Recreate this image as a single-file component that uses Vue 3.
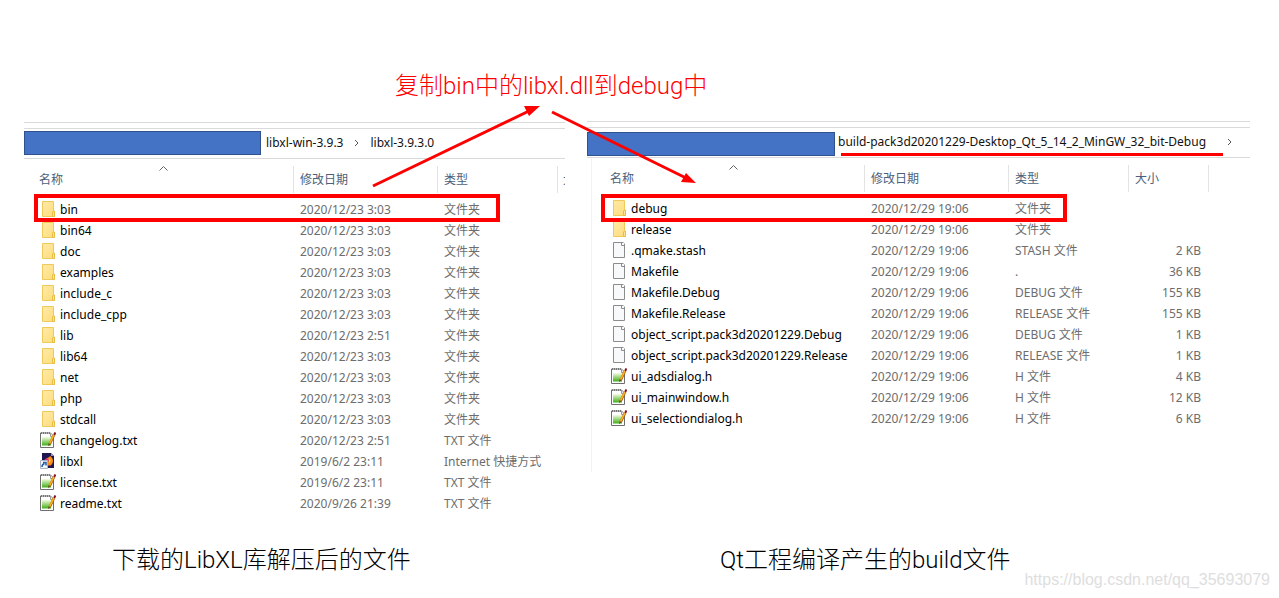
<script setup>
const folder = (name, date = '2020/12/23 3:03') => ({ icon: 'folder', name, date, type: '文件夹' })
const built = (icon, name, type, size) => ({ icon, name, date: '2020/12/29 19:06', type, size })

const windows = [
  {
    id: 'library',
    crumbs: ['libxl-win-3.9.3', 'libxl-3.9.3.0'],
    trailing: false,
    caption: '下载的LibXL库解压后的文件',
    files: [
      folder('bin'),
      folder('bin64'),
      folder('doc'),
      folder('examples'),
      folder('include_c'),
      folder('include_cpp'),
      folder('lib', '2020/12/23 2:51'),
      folder('lib64'),
      folder('net'),
      folder('php'),
      folder('stdcall'),
      { icon: 'note', name: 'changelog.txt', date: '2020/12/23 2:51', type: 'TXT 文件' },
      { icon: 'shortcut', name: 'libxl', date: '2019/6/2 23:11', type: 'Internet 快捷方式' },
      { icon: 'note', name: 'license.txt', date: '2019/6/2 23:11', type: 'TXT 文件' },
      { icon: 'note', name: 'readme.txt', date: '2020/9/26 21:39', type: 'TXT 文件' },
    ],
  },
  {
    id: 'build',
    crumbs: ['build-pack3d20201229-Desktop_Qt_5_14_2_MinGW_32_bit-Debug'],
    trailing: true,
    caption: 'Qt工程编译产生的build文件',
    files: [
      built('folder', 'debug', '文件夹', ''),
      built('folder', 'release', '文件夹', ''),
      built('blank', '.qmake.stash', 'STASH 文件', '2 KB'),
      built('blank', 'Makefile', '.', '36 KB'),
      built('blank', 'Makefile.Debug', 'DEBUG 文件', '155 KB'),
      built('blank', 'Makefile.Release', 'RELEASE 文件', '155 KB'),
      built('blank', 'object_script.pack3d20201229.Debug', 'DEBUG 文件', '1 KB'),
      built('blank', 'object_script.pack3d20201229.Release', 'RELEASE 文件', '1 KB'),
      built('note', 'ui_adsdialog.h', 'H 文件', '4 KB'),
      built('note', 'ui_mainwindow.h', 'H 文件', '12 KB'),
      built('note', 'ui_selectiondialog.h', 'H 文件', '6 KB'),
    ],
  },
]
</script>

<template>
  <main class="page">
    <svg class="defs" aria-hidden="true">
      <defs>
        <linearGradient id="folderFill" x1="0" x2="1" y1="0" y2="1">
          <stop offset="0" stop-color="#ffeaa6" /><stop offset="1" stop-color="#fddc7c" />
        </linearGradient>
        <linearGradient id="noteFill" x1="0" x2="0" y1="0" y2="1">
          <stop offset="0" stop-color="#f4fbe0" /><stop offset="1" stop-color="#3fae16" />
        </linearGradient>
        <symbol id="folder" viewBox="0 0 16 16">
          <path d="M2.5.5h11v10h1v5h-12z" fill="url(#folderFill)" stroke="#efca5a" />
          <path d="M12.5 15.500v-4.500l1-1h1v5.500z" fill="#ffe592" stroke="#e8bd45" />
        </symbol>
        <symbol id="blank" viewBox="0 0 16 16">
          <path d="M2.500.5h11v15h-11z" fill="#f8f9fa" stroke="#8c8c8c" />
          <path d="M10.500.5v3h3" fill="none" stroke="#8c8c8c" />
          <path d="M12 0h2v2z" fill="#fff" />
        </symbol>
        <symbol id="note" viewBox="0 0 16 16">
          <path d="M.5 1h10l3 3v11.500h-13z" fill="#fff" stroke="#6e6e6e" />
          <path d="M1 1h10" stroke="#777" stroke-dasharray="1 1" stroke-width="2" />
          <path d="M10.500 1.500v3h3" fill="#eee" stroke="#999" />
          <path d="M2 5h9v8.500H2z" fill="url(#noteFill)" />
          <path d="M14 3 9.800 12" stroke="#a85d08" stroke-width="2.500" />
          <path d="M13.800 3 9.600 11.500" stroke="#ffb51c" stroke-width="1.600" />
          <path d="m8.500 11.200-.3 3 2.200-2z" fill="#6b4a20" />
          <path d="m14.200 3 1.200-2.500" stroke="#8b1018" stroke-width="2" />
        </symbol>
        <symbol id="shortcut" viewBox="0 0 16 16">
          <path d="M2 0h9l3 3v12H2z" fill="#20154e" />
          <path d="M11 0v3h3z" fill="#9d91c8" />
          <path d="M6 6c2-2 3-1 4-3 3 2 4 5 2 8-1 2-4 2-6 0z" fill="#ff8a16" />
          <path d="M5 6c2-1 3 0 4 1l-2 4-3-1z" fill="#d62b88" />
          <path d="M9 6c2 0 2 3 0 4z" fill="#ffe35a" />
          <path d="M.5 7.500h7v8h-7z" fill="#f4f7fb" stroke="#a8b4c4" />
          <path d="M2 14c0-2 1-3 2.500-3.500M3 9.500h3v3" fill="none" stroke="#235eab" stroke-width="1.500" />
        </symbol>
      </defs>
    </svg>

    <h1 class="title">复制bin中的libxl.dll到debug中</h1>

    <div class="windows">
      <figure v-for="win in windows" :key="win.id" class="window" :class="win.id">
        <div class="strip"></div>
        <nav class="address" aria-label="路径">
          <span class="mask"></span>
          <template v-for="(crumb, i) in win.crumbs" :key="crumb">
            <button type="button" class="crumb">{{ crumb }}</button>
            <svg v-if="win.trailing || i < win.crumbs.length - 1" class="next" viewBox="0 0 5 8" aria-hidden="true">
              <path d="m1 1 3 3-3 3" />
            </svg>
          </template>
        </nav>
        <div class="listing">
          <table>
            <colgroup>
              <col />
              <col class="c-date" />
              <col class="c-type" />
              <col class="c-size" />
              <col v-if="win.id === 'build'" class="c-rest" />
            </colgroup>
            <thead>
              <tr>
                <th class="name">
                  名称
                  <svg class="sort" viewBox="0 0 9 5" aria-hidden="true"><path d="m.5 4.500 4-4 4 4" /></svg>
                </th>
                <th>修改日期</th>
                <th>类型</th>
                <th class="size-head">大小</th>
                <td v-if="win.id === 'build'"></td>
              </tr>
            </thead>
            <tbody>
              <tr v-for="file in win.files" :key="file.name">
                <td class="name">
                  <span class="file"><svg class="icon" aria-hidden="true"><use :href="'#' + file.icon" /></svg>{{ file.name }}</span>
                </td>
                <td>{{ file.date }}</td>
                <td>{{ file.type }}</td>
                <td class="size">{{ file.size }}</td>
                <td v-if="win.id === 'build'"></td>
              </tr>
            </tbody>
          </table>
          <div class="frame"></div>
        </div>
        <figcaption>{{ win.caption }}</figcaption>
      </figure>
    </div>

    <svg class="arrows" viewBox="0 0 330 84" aria-hidden="true">
      <path d="M2 82 160 6M181 8 315 74" stroke="#f00" stroke-width="3" />
      <path d="m169 2-11 10-5-10zM325 79l-15-1 5-9z" fill="#f00" />
    </svg>
    <p class="watermark">https://blog.csdn.net/qq_35693079</p>
  </main>
</template>

<style>
body {
  margin: 0;
  background: #fff;
}
</style>

<style scoped>
.page {
  position: relative;
  box-sizing: border-box;
  min-height: 598px;
  padding: 70px 29px 22px 24px;
  color: #000;
  font: 12px/21px "Noto Sans", "Noto Sans CJK SC", sans-serif;
}
.defs {
  position: absolute;
  width: 0;
  height: 0;
}
.title,
figcaption {
  font: 300 24px/32px Roboto, "Noto Sans CJK SC", sans-serif;
}
.title {
  margin: 0 0 19px;
  padding-left: 371px;
  color: #f00;
}
.windows {
  display: grid;
  grid-template-columns: 541fr 663fr;
  gap: 22px;
}
.window {
  display: flex;
  flex-direction: column;
  min-width: 0;
  min-height: 455px;
  margin: 0;
}
.library {
  padding-top: 1px;
  min-height: 454px;
}
.strip {
  height: 5px;
  border-top: 1px solid #dadada;
  border-bottom: 1px solid #dadada;
}
.address {
  box-sizing: border-box;
  display: flex;
  align-items: center;
  height: 30px;
  padding-bottom: 2px;
  border-bottom: 1px solid #dadada;
}
.mask {
  box-sizing: border-box;
  flex: none;
  width: 237px;
  height: 24px;
  margin-right: 5px;
  border: 1px solid #2f528f;
  background: #4472c4;
}
.build .mask {
  width: 248px;
  margin-right: 3px;
  margin-top: 4px;
}
.crumb {
  position: relative;
  padding: 0;
  border: 0;
  background: none;
  color: #111;
  font: inherit;
  white-space: nowrap;
}
.build .crumb::after {
  content: "";
  position: absolute;
  top: 22px;
  left: 3px;
  right: -17px;
  height: 3px;
  background: #f00;
}
.next {
  width: 5px;
  height: 8px;
  margin: 0 11px;
  fill: none;
  stroke: #555;
}
.build .next {
  margin-left: 21px;
}
.listing {
  position: relative;
}
.build .listing {
  margin-left: 4px;
  min-height: 314px;
  border-left: 1px solid #f3f3f3;
}
table {
  width: 100%;
  border-collapse: collapse;
  table-layout: fixed;
}
.c-date {
  width: 144px;
}
.c-type {
  width: 120px;
}
.c-size {
  width: 7px;
}
.build .c-size {
  width: 80px;
}
.c-rest {
  width: 41px;
}
th,
td {
  padding: 0 0 0 6px;
  color: #6d6d6d;
  font-weight: 400;
  text-align: left;
  white-space: nowrap;
}
th {
  position: relative;
  height: 40px;
  color: #4c607a;
}
th::after {
  content: "";
  position: absolute;
  top: 7px;
  right: 0;
  width: 1px;
  height: 27px;
  background: #e3e3e3;
}
.library .size-head {
  overflow: hidden;
  padding-left: 5px;
}
.library .size-head::after {
  content: none;
}
th.name {
  padding-left: 15px;
}
.build th.name {
  padding-left: 18px;
}
.sort {
  position: absolute;
  top: 7px;
  left: 50%;
  width: 9px;
  height: 5px;
  fill: none;
  stroke: #666;
}
td.name {
  padding-left: 16px;
  color: #000;
}
.build td.name {
  padding-left: 19px;
}
.file {
  display: flex;
  align-items: center;
  gap: 4px;
}
.icon {
  width: 16px;
  height: 16px;
  margin-bottom: 1px;
}
td.size {
  padding: 0 8px 0 0;
  text-align: right;
}
.library td.size {
  padding: 0;
}
.frame {
  position: absolute;
  top: 35px;
  left: 10px;
  right: 65px;
  height: 20px;
  border: 4px solid #f00;
}
.build .frame {
  top: 36px;
  left: 9px;
  right: 183px;
}
figcaption {
  margin-top: auto;
  padding-left: 88px;
}
.build figcaption {
  padding-left: 133px;
}
.arrows {
  position: absolute;
  top: 104px;
  left: 371px;
  width: 330px;
  height: 84px;
}
.watermark {
  position: absolute;
  right: 9px;
  bottom: 8px;
  margin: 0;
  color: #dedede;
  font: 16px/20px "Liberation Sans", sans-serif;
}
</style>
